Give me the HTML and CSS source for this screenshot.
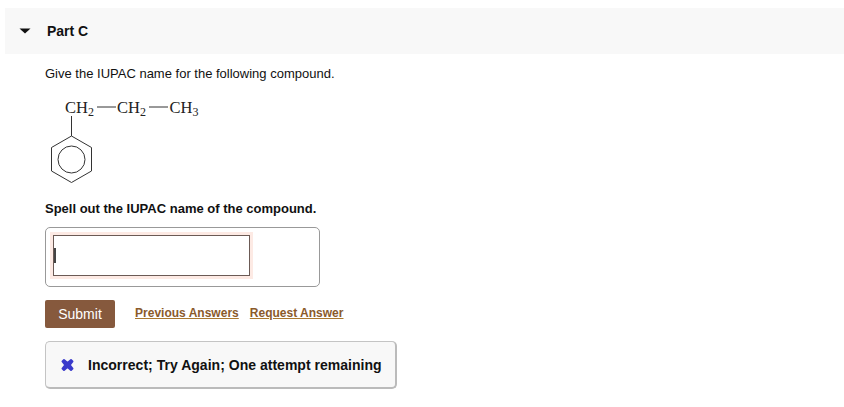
FILE: index.html
```html
<!DOCTYPE html>
<html lang="en">
<head>
<meta charset="utf-8">
<title>Part C</title>
<link rel="stylesheet" href="styles.css">
</head>
<body>
<header class="part-header">
  <svg class="caret" width="12" height="6" viewBox="0 0 12 6"><path d="M0.500 0.500H11.500L6 5.500Z" fill="#111"/></svg>
  <h2 class="part-title">Part C</h2>
</header>
<main class="content">
  <p class="prompt">Give the IUPAC name for the following compound.</p>
  <svg class="molecule" width="170" height="95" viewBox="40 95 170 95">
    <g class="formula">
      <text x="65" y="112.5">CH<tspan class="sub" dy="3">2</tspan></text>
      <text x="117" y="112.5">CH<tspan class="sub" dy="3">2</tspan></text>
      <text x="169.5" y="112.5">CH<tspan class="sub" dy="3">3</tspan></text>
    </g>
    <g fill="none" stroke="#333" stroke-width="1">
      <path d="M97 107H116M149 107H168M71.500 116V136"/>
      <path d="M71.500 136L91.500 147.500V171L71.500 182.500L51.500 171V147.500Z"/>
      <circle cx="71.500" cy="159.500" r="13.500"/>
    </g>
  </svg>
  <p class="instruction">Spell out the IUPAC name of the compound.</p>
  <div class="answer-box">
    <div class="answer-input"><span class="cursor"></span></div>
  </div>
  <div class="actions">
    <button class="submit" type="button">Submit</button>
    <a class="action-link" href="#">Previous Answers</a>
    <a class="action-link" href="#">Request Answer</a>
  </div>
  <div class="feedback">
    <svg class="x-icon" width="15" height="14" viewBox="0 0 15 14"><path d="M2.500 3.500L4 2L7.500 5L11 2L12.500 3.500L9.800 7L12.500 10.500L11 12L7.500 9L4 12L2.500 10.500L5.200 7Z" fill="#3a3acb" stroke="#3a3acb" stroke-width="2" stroke-linejoin="round"/></svg>
    <span class="feedback-text">Incorrect; Try Again; One attempt remaining</span>
  </div>
</main>
</body>
</html>
```
FILE: styles.css
```css
html, body { margin: 0; padding: 0; background: #fff; }
body {
  width: 844px;
  height: 407px;
  overflow: hidden;
  font-family: "Liberation Sans", Arial, sans-serif;
  color: #111;
  padding-top: 8px;
  box-sizing: border-box;
}
.part-header {
  margin-left: 5px;
  height: 46px;
  background: #f8f8f8;
  display: flex;
  align-items: center;
  gap: 16px;
  padding-left: 14px;
}
.part-title { margin: 0 0 1px; font-size: 14px; font-weight: bold; }
.content { padding-left: 45px; display: flex; flex-direction: column; align-items: flex-start; }
.prompt { margin: 12px 0 0; font-size: 13px; line-height: 15px; }
.molecule { display: block; margin-top: 14px; margin-left: -5px; }
.formula { font-family: "Liberation Serif", serif; font-size: 16.500px; fill: #222; }
.sub { font-size: 12px; }
.instruction { margin: 11px 0 0; font-size: 13px; line-height: 15px; font-weight: bold; }
.answer-box {
  margin-top: 11px;
  width: 266px;
  height: 55px;
  border: 1px solid #999;
  border-radius: 5px;
  display: flex;
  align-items: center;
  padding: 0 0 3px 7px;
}
.answer-input {
  width: 195px;
  height: 39px;
  border: 1px solid #6b5a55;
  box-shadow: 0 0 0 3px #fdeae4;
  display: flex;
  align-items: center;
  background: #fff;
}
.cursor { width: 2px; height: 15px; background: #444; }
.actions { margin-top: 13px; display: flex; align-items: center; }
.submit {
  width: 70px;
  height: 28px;
  border: 0;
  padding: 0;
  border-radius: 2px;
  background: #86593d;
  color: #fff;
  font: 14px "Liberation Sans", Arial, sans-serif;
}
.action-link {
  font-size: 12px;
  font-weight: bold;
  color: #8a5a2b;
  text-decoration: underline;
  text-decoration-color: #a9782f;
  letter-spacing: .01px;
  margin-left: 11px;
  padding-bottom: 2px;
}
.submit + .action-link { margin-left: 20px; }
.feedback {
  margin-top: 13px;
  width: 335px;
  height: 44px;
  border: 1px solid #c4c4c4;
  border-right: 2px solid #bbb;
  border-bottom: 2px solid #bbb;
  border-radius: 5px;
  background: #f8f8f8;
  display: flex;
  align-items: center;
  padding: 1px 0 0 14px;
  gap: 13px;
}
.feedback-text { font-size: 14px; font-weight: bold; letter-spacing: .02px; }
```
